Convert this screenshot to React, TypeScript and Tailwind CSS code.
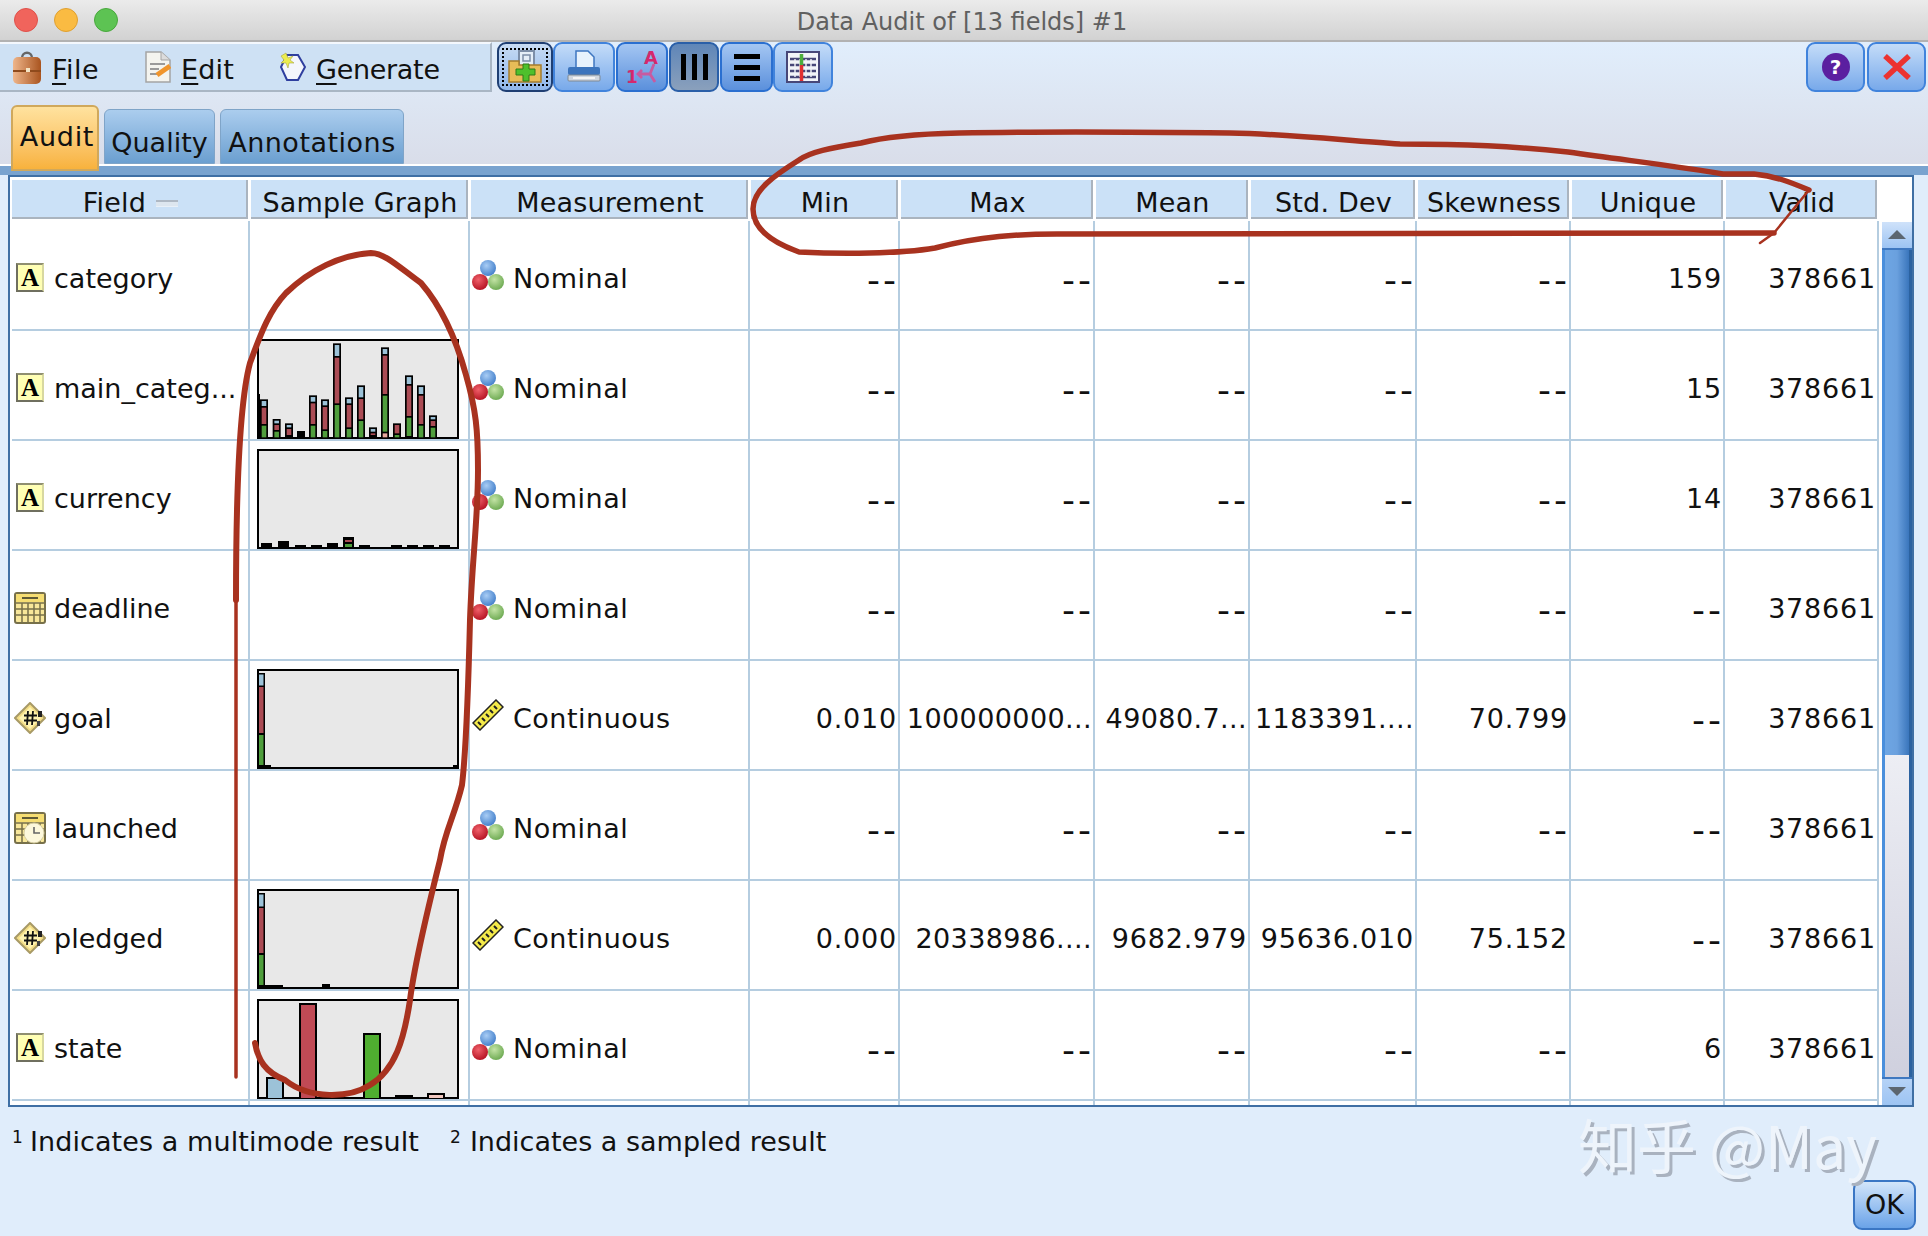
import React from 'react';

const COLS = 'grid grid-cols-[238px_220px_280px_150px_195px_155px_167px_154px_154px_154px]';
const BLUE = '#9cc2d8';
const RED = '#ab4c55';
const GREEN = '#4f9e3c';
const PINK = '#e6a79c';
const BLACK = '#000';

function AIcon() {
  return (
    <span className="flex h-[29px] w-[28px] items-center justify-center border-2 border-[#6f6f5f] border-r-[#d8d8a0] border-t-[#8f8f70] bg-[#ffffb4] font-['Liberation_Serif',serif] text-[25px] leading-none font-bold text-black">
      A
    </span>
  );
}

function NumIcon() {
  return (
    <svg width="32" height="32" viewBox="0 0 32 32">
      <path d="M16 1 L31 16 L16 31 L1 16 Z" fill="#f3dc85" stroke="#a89a66" strokeWidth="2" />
      <path d="M16 5 L27 16 L16 27 L5 16 Z" fill="#fff3b0" />
      <path d="M14 9 L13 23 M19 9 L18 23 M10 13.5 H23 M10 18.5 H23" stroke="#111" strokeWidth="1.8" fill="none" />
      <rect x="24" y="9" width="4" height="6" fill="#222" />
      <rect x="23" y="19" width="3" height="5" fill="#444" />
    </svg>
  );
}

function CalendarIcon({ clock }: { clock?: boolean }) {
  return (
    <svg width="32" height="32" viewBox="0 0 32 32">
      <rect x="1" y="1" width="30" height="30" rx="2" fill="#f8e79a" stroke="#77704a" strokeWidth="2" />
      <rect x="2" y="2" width="28" height="8" fill="#f5dd72" />
      <path d="M8 6 H24" stroke="#5f5a35" strokeWidth="2" />
      <path d="M2 11 H30 M2 17 H30 M2 23 H30 M8 11 V31 M14 11 V31 M20 11 V31 M26 11 V31" stroke="#77704a" strokeWidth="1.5" />
      {clock && (
        <g>
          <circle cx="20" cy="21" r="10" fill="#fdf8dc" stroke="#d4cca0" />
          <path d="M20 15 V21 H26" stroke="#666" strokeWidth="1.6" fill="none" />
        </g>
      )}
    </svg>
  );
}

function NominalIcon() {
  return (
    <svg width="32" height="32" viewBox="0 0 32 32">
      <defs>
        <radialGradient id="ballB" cx="40%" cy="35%" r="70%">
          <stop offset="0%" stopColor="#a9cdf5" />
          <stop offset="100%" stopColor="#3f7cc9" />
        </radialGradient>
        <radialGradient id="ballR" cx="40%" cy="35%" r="70%">
          <stop offset="0%" stopColor="#f0606a" />
          <stop offset="100%" stopColor="#b3101f" />
        </radialGradient>
        <radialGradient id="ballG" cx="40%" cy="35%" r="70%">
          <stop offset="0%" stopColor="#c4e4a6" />
          <stop offset="100%" stopColor="#6aa84f" />
        </radialGradient>
      </defs>
      <circle cx="16" cy="9" r="8" fill="url(#ballB)" />
      <circle cx="24" cy="23" r="8" fill="url(#ballG)" />
      <circle cx="8" cy="23" r="8" fill="url(#ballR)" />
    </svg>
  );
}

function RulerIcon() {
  return (
    <svg width="32" height="32" viewBox="0 0 32 32">
      <path d="M1 24 L24 1 L31 8 L8 31 Z" fill="#f4ea4a" stroke="#222" strokeWidth="1.5" />
      <path d="M6 23 L9 26 M10 19 L13 22 M14 15 L17 18 M18 11 L21 14 M22 7 L25 10" stroke="#222" strokeWidth="2" />
    </svg>
  );
}

function bar(c: number, top: number, segs: [number, string][], key: number) {
  const y = (v: number) => v / 3 - 19;
  const x = c / 3 - 17 - 4;
  let prev = top;
  return (
    <g key={key}>
      <rect x={x} y={y(top)} width="8" height={99 - y(top)} fill={BLACK} />
      {segs.map(([end, col], i) => {
        const r = (
          <rect key={i} x={x + 1.7} y={y(prev) + 1.7} width="4.6" height={Math.max(y(end) - y(prev) - 1.7, 0.5)} fill={col} />
        );
        prev = end;
        return r;
      })}
    </g>
  );
}

function GraphBox({ children }: { children: React.ReactNode }) {
  return (
    <svg width="202" height="100" viewBox="0 0 202 100" className="block">
      <rect x="1" y="1" width="200" height="98" fill="#e8e8e8" stroke="#000" strokeWidth="2" />
      {children}
    </svg>
  );
}

function CategChart() {
  const d: [number, number, [number, string][]][] = [
    [72, 238, [[258, BLUE], [312, RED], [352, GREEN]]],
    [110, 297, [[310, BLUE], [330, RED], [352, GREEN]]],
    [147, 310, [[322, BLUE], [345, RED]]],
    [183, 333, []],
    [219, 226, [[245, BLUE], [312, RED], [352, GREEN]]],
    [255, 238, [[256, BLUE], [328, RED], [352, GREEN]]],
    [291, 70, [[108, BLUE], [250, RED], [352, GREEN]]],
    [327, 232, [[250, BLUE], [322, RED], [352, GREEN]]],
    [363, 196, [[232, BLUE], [298, RED], [352, GREEN]]],
    [399, 322, [[335, BLUE], [345, RED]]],
    [435, 82, [[102, BLUE], [222, RED], [335, GREEN], [352, PINK]]],
    [471, 310, [[340, RED], [352, GREEN]]],
    [507, 166, [[192, BLUE], [288, RED], [348, GREEN]]],
    [543, 196, [[222, BLUE], [312, RED], [352, GREEN]]],
    [579, 286, [[298, BLUE], [318, RED], [352, GREEN]]],
  ];
  return (
    <GraphBox>
      <rect x="0" y="55" width="3" height="45" fill={BLACK} />
      {d.map(([c, t, s], i) => bar(c, t, s, i))}
    </GraphBox>
  );
}

function CurrencyChart() {
  const d: [number, number][] = [
    [4, 94], [21, 92], [38, 96], [54, 96], [70, 94], [86, 88], [102, 96], [134, 96], [150, 96], [166, 96], [182, 96],
  ];
  return (
    <GraphBox>
      {d.map(([x, t], i) => (
        <rect key={i} x={x} y={t} width="11" height={99 - t} fill={BLACK} />
      ))}
      <rect x="88" y="91" width="7" height="2" fill={RED} />
      <rect x="88" y="95" width="7" height="3" fill={GREEN} />
    </GraphBox>
  );
}

function GoalChart() {
  return (
    <GraphBox>
      <rect x="1" y="4" width="7" height="95" fill={BLACK} />
      <rect x="2" y="5.5" width="4.5" height="11" fill={BLUE} />
      <rect x="2" y="18" width="4.5" height="46" fill={RED} />
      <rect x="2" y="66" width="4.5" height="31" fill={GREEN} />
      <rect x="1" y="96" width="13" height="3" fill={BLACK} />
      <rect x="196" y="96" width="5" height="3" fill={BLACK} />
    </GraphBox>
  );
}

function PledgedChart() {
  return (
    <GraphBox>
      <rect x="1" y="4" width="7" height="95" fill={BLACK} />
      <rect x="2" y="5.5" width="4.5" height="12" fill={BLUE} />
      <rect x="2" y="19" width="4.5" height="45" fill={RED} />
      <rect x="2" y="66" width="4.5" height="31" fill={GREEN} />
      <rect x="1" y="96" width="25" height="3" fill={BLACK} />
      <rect x="65" y="95" width="8" height="4" fill={BLACK} />
    </GraphBox>
  );
}

function StateChart() {
  const d: [number, number, number, string][] = [
    [9, 78, 18, BLUE],
    [42, 4, 18, '#c04a55'],
    [106, 34, 18, '#4fae30'],
    [138, 96, 18, BLACK],
    [170, 94, 18, '#f0c8c0'],
  ];
  return (
    <GraphBox>
      {d.map(([x, t, w, c], i) => (
        <g key={i}>
          <rect x={x} y={t} width={w} height={99 - t} fill={BLACK} />
          <rect x={x + 2} y={t + 2} width={w - 4} height={99 - t - 2} fill={c} />
        </g>
      ))}
    </GraphBox>
  );
}

type Row = {
  name: string;
  icon: React.ReactNode;
  graph?: React.ReactNode;
  cont?: boolean;
  vals: string[];
};

const dash = ['--', '--', '--', '--', '--'];

const rows: Row[] = [
  { name: 'category', icon: <AIcon />, vals: [...dash, '159', '378661'] },
  { name: 'main_categ...', icon: <AIcon />, graph: <CategChart />, vals: [...dash, '15', '378661'] },
  { name: 'currency', icon: <AIcon />, graph: <CurrencyChart />, vals: [...dash, '14', '378661'] },
  { name: 'deadline', icon: <CalendarIcon />, vals: [...dash, '--', '378661'] },
  { name: 'goal', icon: <NumIcon />, graph: <GoalChart />, cont: true, vals: ['0.010', '100000000...', '49080.7...', '1183391....', '70.799', '--', '378661'] },
  { name: 'launched', icon: <CalendarIcon clock />, vals: [...dash, '--', '378661'] },
  { name: 'pledged', icon: <NumIcon />, graph: <PledgedChart />, cont: true, vals: ['0.000', '20338986....', '9682.979', '95636.010', '75.152', '--', '378661'] },
  { name: 'state', icon: <AIcon />, graph: <StateChart />, vals: [...dash, '6', '378661'] },
];

const heads = ['Field', 'Sample Graph', 'Measurement', 'Min', 'Max', 'Mean', 'Std. Dev', 'Skewness', 'Unique', 'Valid'];

function ToolButton({ children, className }: { children: React.ReactNode; className?: string }) {
  return (
    <div
      className={
        'flex h-[50px] items-center justify-center rounded-[9px] border-2 ' +
        (className ?? 'border-[#4083dc] bg-gradient-to-b from-[#c4dcf8] to-[#78a9ea]')
      }
    >
      {children}
    </div>
  );
}

function MenuItem({ icon, first, rest, className }: { icon: React.ReactNode; first: string; rest: string; className: string }) {
  return (
    <div className={'flex items-center ' + className}>
      {icon}
      <span className="ml-[10px] pt-[7px]">
        <span className="underline decoration-2 underline-offset-[4px]">{first}</span>
        {rest}
      </span>
    </div>
  );
}

function Value({ v }: { v: string }) {
  if (v === '--') return <span className="-mr-[2px] text-[36px] leading-none tracking-[3px]">--</span>;
  return <span className={v.endsWith('.') ? 'tracking-[0.4px]' : ''}>{v}</span>;
}

export default function App() {
  return (
    <div className="relative flex h-[1236px] w-[1928px] flex-col overflow-hidden bg-[#e0edfb] font-['DejaVu_Sans',sans-serif] text-[27px] text-[#111]">
      {/* title bar */}
      <div className="relative flex h-[42px] items-center justify-center border-b-2 border-[#b2b2b2] bg-gradient-to-b from-[#ebebeb] to-[#d2d2d2] pt-[4px] pr-[4px] text-[24px] text-[#606060]">
        <div className="absolute top-[8px] left-[14px] flex gap-[16px]">
          <span className="size-[24px] rounded-full border border-[#e0504a] bg-[#f0645c]" />
          <span className="size-[24px] rounded-full border border-[#e0a030] bg-[#fabb42]" />
          <span className="size-[24px] rounded-full border border-[#48a83c] bg-[#5dc353]" />
        </div>
        Data Audit of [13 fields] #1
      </div>

      {/* toolbar + tabs */}
      <div className="flex h-[124px] flex-col bg-gradient-to-b from-[#e1eefc] to-[#d9dde9]">
        <div className="flex h-[52px] items-start">
          <div className="flex h-[50px] w-[492px] items-center border-t-2 border-r-2 border-b-2 border-t-[#f4f8fd] border-r-[#a9b6c4] border-b-[#a9b6c4] bg-[#cee1f4]">
            <MenuItem
              className="ml-[12px] w-[133px] tracking-[0.5px]"
              first="F"
              rest="ile"
              icon={
                <svg width="30" height="36" viewBox="0 0 30 36">
                  <defs>
                    <linearGradient id="bag" x1="0" y1="0" x2="1" y2="0">
                      <stop offset="0%" stopColor="#eeb58a" />
                      <stop offset="100%" stopColor="#a9541f" />
                    </linearGradient>
                  </defs>
                  <path d="M10 9 C10 2 20 2 20 9" fill="none" stroke="#666" strokeWidth="2.5" />
                  <rect x="1" y="8" width="28" height="27" rx="5" fill="url(#bag)" />
                  <rect x="1" y="21" width="28" height="2" fill="#8f4a1c" />
                  <rect x="14" y="19" width="4" height="4" fill="#f4e4c4" />
                </svg>
              }
            />
            <MenuItem
              className="w-[135px] tracking-[0.2px]"
              first="E"
              rest="dit"
              icon={
                <svg width="26" height="32" viewBox="0 0 26 32">
                  <path d="M1 1 H16 L25 9 V31 H1 Z" fill="#f4f4ef" stroke="#a4a4a4" strokeWidth="1.5" />
                  <path d="M16 1 V9 H25" fill="#dcdcdc" stroke="#a4a4a4" />
                  <path d="M5 13 H20 M5 18 H14 M5 23 H12" stroke="#9a9a9a" strokeWidth="2" />
                  <path d="M12 24 L25 15" stroke="#f0952c" strokeWidth="5" />
                </svg>
              }
            />
            <MenuItem
              className="tracking-[-0.3px]"
              first="G"
              rest="enerate"
              icon={
                <svg width="26" height="30" viewBox="0 0 26 30">
                  <path d="M7 3 H18 L25 15 L18 28 H7 L1 15 Z" fill="#f4f6fc" stroke="#2f3f9f" strokeWidth="2" />
                  <path d="M6 1 L8 6 L13 4 L10 8 L14 11 L9 11 L8 16 L6 11 L1 11 L4 8 L1 4 Z" fill="#ecec50" stroke="#aaa840" strokeWidth="0.6" />
                </svg>
              }
            />
          </div>
          <div className="ml-[5px] flex">
            <ToolButton className="w-[56px] border-[#1f3f73] bg-gradient-to-b from-[#c7dbf3] to-[#8fb6ea]">
              <div className="flex h-[38px] w-[46px] items-center justify-center border-2 border-dotted border-black">
                <svg width="36" height="34" viewBox="0 0 36 34">
                  <rect x="12" y="1" width="15" height="20" fill="#e4eef8" stroke="#7c8ea8" strokeWidth="2" />
                  <rect x="16" y="5" width="7" height="6" fill="none" stroke="#7c8ea8" strokeWidth="1.5" />
                  <path d="M2 11 H12 V15 H34 V32 H2 Z" fill="#e8bc58" stroke="#a57c2c" strokeWidth="1.5" />
                  <path d="M16 14 H22 V19 H28 V25 H22 V31 H16 V25 H9 V19 H16 Z" fill="#4ec02c" stroke="#2e7a18" strokeWidth="1" />
                </svg>
              </div>
            </ToolButton>
            <ToolButton className="w-[62px] border-[#4083dc] bg-gradient-to-b from-[#c4dcf8] to-[#78a9ea]">
              <svg width="34" height="34" viewBox="0 0 34 34">
                <path d="M9 1 H21 L27 7 V18 H9 Z" fill="#e8f2fc" stroke="#3e76c0" strokeWidth="1.5" />
                <rect x="1" y="17" width="32" height="8" rx="2" fill="#3c74bc" />
                <rect x="1" y="25" width="32" height="6" rx="1" fill="#cfd6df" stroke="#7f8994" />
                <rect x="6" y="27" width="22" height="2" fill="#f4f4f4" />
              </svg>
            </ToolButton>
            <ToolButton className="ml-[1px] w-[52px] border-[#2a6fd0] bg-gradient-to-b from-[#a4c6f2] to-[#5b90dc]">
              <svg width="36" height="42" viewBox="0 0 36 42" className="overflow-visible font-['DejaVu_Sans',sans-serif] font-bold">
                <text x="20" y="18" fontSize="18" fill="#d4286c">A</text>
                <text x="2" y="37" fontSize="17" fill="#d4286c">1</text>
                <path d="M14 28 H26 M18 24 L14 28 L18 32 M30 18 L26 28 L31 36" stroke="#c85aa0" strokeWidth="2.8" fill="none" />
              </svg>
            </ToolButton>
            <ToolButton className="ml-[1px] w-[50px] border-[#2a5fa8] bg-gradient-to-b from-[#5f86b8] to-[#8aa0bc]">
              <div className="flex gap-[6px]">
                <span className="h-[26px] w-[5px] bg-black" />
                <span className="h-[26px] w-[5px] bg-black" />
                <span className="h-[26px] w-[5px] bg-black" />
              </div>
            </ToolButton>
            <ToolButton className="ml-[1px] w-[53px] border-[#2a6fd0] bg-gradient-to-b from-[#a4c6f2] to-[#5b90dc]">
              <div className="flex flex-col gap-[6px]">
                <span className="h-[5px] w-[26px] bg-black" />
                <span className="h-[5px] w-[26px] bg-black" />
                <span className="h-[5px] w-[26px] bg-black" />
              </div>
            </ToolButton>
            <ToolButton className="w-[60px] border-[#4083dc] bg-gradient-to-b from-[#c4dcf8] to-[#78a9ea]">
              <svg width="34" height="32" viewBox="0 0 34 32">
                <rect x="1" y="1" width="32" height="30" fill="#f2f4f8" stroke="#474778" strokeWidth="2" />
                <path d="M4 8 H30 M4 14 H30 M4 20 H30 M4 26 H30" stroke="#474778" strokeWidth="2.5" />
                <path d="M9 8 V26 M14 8 V26 M20 8 V26 M25 8 V26" stroke="#f2f4f8" strokeWidth="1.4" />
                <path d="M15.5 3 V14" stroke="#4cae3c" strokeWidth="3.5" />
                <path d="M15.5 14 V30" stroke="#e23030" strokeWidth="3.5" />
              </svg>
            </ToolButton>
          </div>
          <div className="mr-[2px] ml-auto flex gap-[2px]">
            <ToolButton className="w-[59px] border-[#4083dc] bg-gradient-to-b from-[#c4dcf8] to-[#78a9ea]">
              <span className="flex size-[28px] items-center justify-center rounded-full bg-[#5b1fa0] text-[20px] leading-none font-bold text-white">
                ?
              </span>
            </ToolButton>
            <ToolButton className="w-[59px] border-[#4083dc] bg-gradient-to-b from-[#c4dcf8] to-[#78a9ea]">
              <svg width="30" height="26" viewBox="0 0 30 26">
                <path d="M3 2 L27 24 M27 2 L3 24" stroke="#ec3230" strokeWidth="5.5" />
              </svg>
            </ToolButton>
          </div>
        </div>

        <div className="flex h-[72px] items-end gap-[5px] border-b-2 border-white pl-[11px]">
          <div className="relative z-10 -mb-[7px] flex h-[66px] w-[88px] items-start justify-center rounded-t-[6px] border-2 border-[#d0a85c] bg-gradient-to-b from-[#ffe29e] to-[#f8b23c] pt-[10px] pl-[4px] tracking-[0.7px]">
            Audit
          </div>
          <div className="flex h-[55px] w-[111px] items-center justify-center rounded-t-[6px] border border-[#7fa4c8] bg-gradient-to-b from-[#abcdee] to-[#6b9fd0] pt-[13px]">
            Quality
          </div>
          <div className="flex h-[55px] w-[184px] items-center justify-center rounded-t-[6px] border border-[#7fa4c8] bg-gradient-to-b from-[#abcdee] to-[#6b9fd0] pt-[13px] tracking-[0.5px]">
            Annotations
          </div>
        </div>
      </div>
      <div className="h-[9px] bg-[#79a3cf]" />

      {/* table frame */}
      <div className="mr-[14px] ml-[8px] flex h-[932px] border-2 border-[#3f6fa4] bg-white">
        <div className="ml-[2px] flex flex-col">
          <div className={COLS + ' h-[44px] items-start pt-[3px]'}>
            {heads.map((h, i) => (
              <div
                key={h}
                className={
                  'mr-[2px] flex h-[39px] items-center justify-center border-r-2 border-b-2 border-r-[#aab4bf] border-b-[#aab4bf] bg-[#cbe1f7] pt-[9px] pl-[3px] tracking-[0.2px] ' +
                  (i === 0 ? 'ml-0' : 'ml-[1px]')
                }
              >
                {h}
                {i === 0 && <span className="ml-[10px] h-[7px] w-[22px] border-t-2 border-b border-t-[#aeb8c4] border-b-[#e8f0f8] bg-[#dde6ef]" />}
              </div>
            ))}
          </div>
          {rows.map((r) => (
            <div key={r.name} className={COLS + ' h-[110px] border-b-2 border-[#b5cde0]'}>
              <div className="flex items-center border-r-2 border-[#b5cde0] pt-[5px] pl-[2px]">
                <span className="flex w-[32px] justify-center">{r.icon}</span>
                <span className="ml-[8px] pt-[4px]">{r.name}</span>
              </div>
              <div className="border-r-2 border-[#b5cde0] pt-[8px] pl-[7px]">{r.graph}</div>
              <div className="flex items-center border-r-2 border-[#b5cde0] pl-[2px]">
                {r.cont ? <RulerIcon /> : <NominalIcon />}
                <span className="ml-[9px] pt-[9px] tracking-[0.5px]">{r.cont ? 'Continuous' : 'Nominal'}</span>
              </div>
              {r.vals.map((v, i) => (
                <div key={i} className="flex items-center justify-end overflow-hidden border-r-2 border-[#b5cde0] pt-[9px] pr-[1px] tracking-[0.8px] whitespace-nowrap">
                  <Value v={v} />
                </div>
              ))}
            </div>
          ))}
          <div className={COLS + ' flex-1'}>
            {heads.map((h) => (
              <div key={h} className="border-r-2 border-[#b5cde0]" />
            ))}
          </div>
        </div>

        {/* scrollbar */}
        <div className="ml-[3px] flex w-[30px] flex-col pt-[45px]">
          <div className="flex h-[28px] items-start justify-center border-b-2 border-[#3f78c0] bg-gradient-to-b from-[#cfe2fa] to-[#9dc4f3] pt-[8px]">
            <span className="h-0 w-0 border-x-[9px] border-b-[9px] border-x-transparent border-b-[#5c6670]" />
          </div>
          <div className="h-[505px] border-x-[3px] border-r-[#2b62a0] border-l-[#4a8fdc] bg-gradient-to-r from-[#6ea6e4] via-[#6aa0de] to-[#3a76bc]" />
          <div className="flex-1 border-x-[3px] border-r-[#2b62a0] border-l-[#4a8fdc] bg-gradient-to-b from-[#edeef4] to-[#cfd0de]" />
          <div className="flex h-[28px] items-start justify-center border-t-2 border-[#3f78c0] bg-gradient-to-b from-[#b5d2f6] to-[#9dc4f3] pt-[8px]">
            <span className="h-0 w-0 border-x-[9px] border-t-[9px] border-x-transparent border-t-[#5c6670]" />
          </div>
        </div>
      </div>

      {/* footer */}
      <div className="flex flex-1 items-start justify-between pr-[12px] pl-[12px]">
        <div className="flex pt-[15px] leading-[40px]">
          <span className="tracking-[0.09px]">
            <sup className="mr-[7px] text-[17px]">1</sup>Indicates a multimode result
          </span>
          <span className="ml-[31px]">
            <sup className="mr-[9px] text-[17px]">2</sup>Indicates a sampled result
          </span>
        </div>
        <div className="mt-[73px] flex h-[50px] w-[63px] items-center justify-center rounded-[9px] border-2 border-[#3a76c4] bg-gradient-to-b from-[#d2e5fa] to-[#6aa3e8]">
          OK
        </div>
      </div>

      {/* watermark */}
      <div className="absolute top-[1104px] left-[1578px] font-['Noto_Sans_CJK_SC',sans-serif] text-[59px] leading-[80px] whitespace-nowrap text-[#eef4fb] [text-shadow:3px_3px_0_#a9b2bf]">
        知乎 @May
      </div>

      {/* hand drawn marks */}
      <svg className="pointer-events-none absolute top-0 left-0" width="1928" height="1236" viewBox="0 0 1928 1236" fill="none" stroke="#a8321f" strokeLinecap="round" strokeLinejoin="round">
        <path d="M236 1077 L236 600" strokeWidth="3.5" />
        <path
          d="M236 600 C236 480 240 400 250 363 C262 330 270 310 286 293 C310 270 340 255 371 253 C385 253 400 268 421 283 C440 305 455 335 466 375 C476 410 478 430 478 470 C478 520 472 560 470 620 C468 700 465 760 462 785 C455 815 445 830 440 860 C430 900 415 960 410 1000 C404 1040 395 1070 370 1085 C350 1098 310 1100 285 1080 C265 1072 258 1060 255 1043"
          strokeWidth="6"
        />
        <path d="M1760 243 L1774 233 L1809 190" strokeWidth="2.5" />
        <path
          d="M1809 190 C1790 182 1775 176 1754 174 L1723 174 C1690 168 1640 162 1568 152 C1510 146 1467 144 1400 144 C1340 140 1290 134 1230 133 C1150 132 1050 131 959 133 C910 134 880 138 861 143 C830 148 810 152 799 160 C775 175 753 190 753 209 C753 225 765 240 799 252 C840 254 900 254 935 248 C980 236 1020 234 1057 234 L1774 233"
          strokeWidth="5.5"
        />
      </svg>
    </div>
  );
}
